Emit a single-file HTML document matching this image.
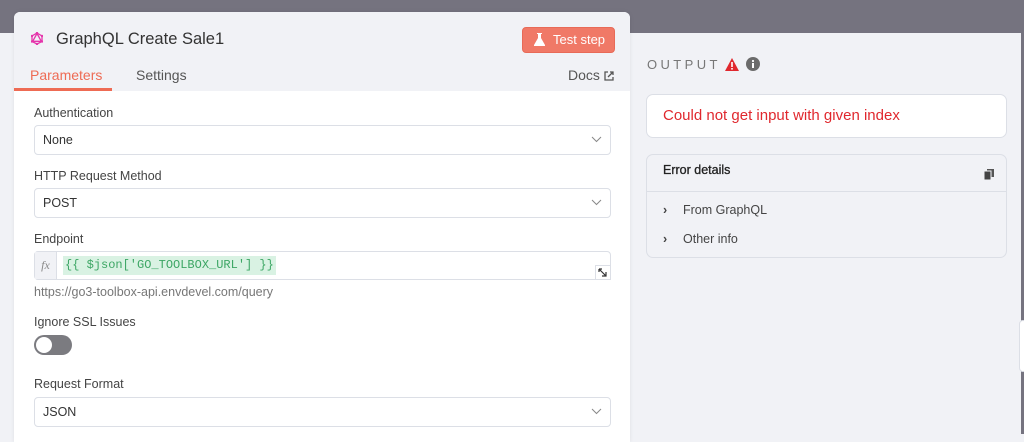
<!DOCTYPE html>
<html><head><meta charset="utf-8"><style>
*{box-sizing:border-box;margin:0;padding:0}
body{width:1024px;height:434px;overflow:hidden;background:#f1f2f6;font-family:"Liberation Sans",sans-serif;position:relative;color:#444}
.top{position:absolute;left:0;top:0;width:1024px;height:33px;background:#75737f}
.rstrip{position:absolute;left:1021px;top:33px;width:3px;height:401px;background:#75737f}
.tab{position:absolute;left:1019px;top:320px;width:8px;height:52px;background:#fff;border:1px solid #dcdfe6;border-radius:4px}
.right{position:absolute;left:630px;top:33px;width:391px;height:401px;background:#f1f2f6;border-top-right-radius:8px}
.left{position:absolute;left:14px;top:12px;width:616px;height:430px;background:#fff;border-radius:6px 6px 0 0;box-shadow:0 0 4px rgba(0,0,0,.08);overflow:hidden}
.hdr{background:#f1f2f6;height:79px;position:relative}
.title{position:absolute;left:42px;top:18px;font-size:16.5px;color:#333}
.btn{position:absolute;left:508px;top:15px;width:93px;height:26px;background:#f07967;border:1px solid #e86a57;border-radius:4px;color:#fff;font-size:13px;line-height:24px;padding-left:30px}
.tabs{position:absolute;top:55px;font-size:14px}
.lbl{position:absolute;left:20px;font-size:12.5px;color:#444}
.sel{position:absolute;left:20px;width:577px;height:30px;border:1px solid #dcdfe6;border-radius:4px;font-size:12.5px;line-height:28px;padding-left:8px;color:#333}
.sel svg.ch{position:absolute;right:8px;top:10px}
</style></head><body>
<div class="top"></div>
<div class="right">
 <div style="position:absolute;left:17px;top:24px;font-size:13px;letter-spacing:3.4px;color:#777">OUTPUT</div>
 <svg style="position:absolute;left:95px;top:25px" width="14" height="13" viewBox="0 0 14 13"><path d="M7 0L14 13H0Z" fill="#e0282e"/><rect x="6.2" y="4" width="1.6" height="5" fill="#fff"/><rect x="6.2" y="10" width="1.6" height="1.6" fill="#fff"/></svg>
 <svg style="position:absolute;left:116px;top:24px" width="14" height="14" viewBox="0 0 14 14"><circle cx="7" cy="7" r="7" fill="#6b6b6b"/><rect x="6" y="6" width="2" height="5" fill="#fff"/><circle cx="7" cy="4" r="1.1" fill="#fff"/></svg>
 <div style="position:absolute;left:16px;top:61px;width:361px;height:44px;background:#fff;border:1px solid #dcdfe6;border-radius:7px;color:#e0282e;font-size:15px;line-height:42px;padding-left:16px">Could not get input with given index</div>
 <div style="position:absolute;left:16px;top:121px;width:361px;height:104px;border:1px solid #dcdfe6;border-radius:7px">
  <div style="height:37px;border-bottom:1px solid #dcdfe6;font-size:12.5px;color:#222;padding:8px 0 0 16px;-webkit-text-stroke:0.3px #222">Error details</div>
  <svg style="position:absolute;right:12px;top:14px" width="10" height="11" viewBox="0 0 10 11"><rect x="3" y="0" width="7" height="8" fill="#555"/><rect x="0" y="2" width="7" height="9" fill="#444" stroke="#f1f2f6" stroke-width="1"/></svg>
  <div style="position:absolute;left:16px;top:48px;font-size:12.5px;color:#444"><b style="display:inline-block;width:20px">›</b>From GraphQL</div>
  <div style="position:absolute;left:16px;top:77px;font-size:12.5px;color:#444"><b style="display:inline-block;width:20px">›</b>Other info</div>
 </div>
</div>
<div class="rstrip"></div><div class="tab"></div>
<div class="left">
 <div class="hdr">
  <svg style="position:absolute;left:17px;top:20px" width="12" height="13" viewBox="0 0 12 13"><g fill="none" stroke="#e535ab" stroke-width="1.3"><path d="M6 1L11 4V9.5L6 12L1 9.5V4Z"/><path d="M6 1.5L10.3 9.3H1.7Z"/></g><g fill="#e535ab"><circle cx="6" cy="1" r="1.2"/><circle cx="11" cy="4" r="1.2"/><circle cx="11" cy="9.5" r="1.2"/><circle cx="6" cy="12" r="1.2"/><circle cx="1" cy="9.5" r="1.2"/><circle cx="1" cy="4" r="1.2"/></g></svg>
  <div class="title">GraphQL Create Sale1</div>
  <div class="btn"><svg style="position:absolute;left:11px;top:5px" width="11" height="13" viewBox="0 0 11 13"><path d="M3 0H8V1H7V5L11 12V13H0V12L4 5V1H3Z" fill="#fff"/></svg>Test step</div>
  <div class="tabs" style="left:16px;color:#ee6b54">Parameters</div>
  <div style="position:absolute;left:0;top:76px;width:98px;height:3px;background:#ee6b54"></div>
  <div class="tabs" style="left:122px;color:#555">Settings</div>
  <div class="tabs" style="left:554px;color:#555">Docs <svg width="10" height="10" viewBox="0 0 10 10" style="vertical-align:-1px"><path d="M4 1H1V9H9V6M6 1H9V4M9 1L4 6" fill="none" stroke="#555" stroke-width="1.3"/></svg></div>
 </div>
 <div class="lbl" style="top:94px">Authentication</div>
 <div class="sel" style="top:113px">None<svg class="ch" width="11" height="7" viewBox="0 0 11 7"><path d="M1 1L5.5 5.5L10 1" fill="none" stroke="#888" stroke-width="1"/></svg></div>
 <div class="lbl" style="top:157px">HTTP Request Method</div>
 <div class="sel" style="top:176px">POST<svg class="ch" width="11" height="7" viewBox="0 0 11 7"><path d="M1 1L5.5 5.5L10 1" fill="none" stroke="#888" stroke-width="1"/></svg></div>
 <div class="lbl" style="top:220px">Endpoint</div>
 <div class="sel" style="top:239px;padding:0;height:29px">
  <div style="position:absolute;left:0;top:0;width:22px;height:27px;background:#f1f2f6;border-right:1px solid #dcdfe6;font-family:'Liberation Serif',serif;font-style:italic;font-size:12px;color:#888;text-align:center;line-height:26px">fx</div>
  <span style="position:absolute;left:28px;top:4px;height:19px;line-height:19px;background:#d9f2e3;color:#3ca664;font-family:'Liberation Mono',monospace;font-size:12px;padding:0 2px">{{ $json['GO_TOOLBOX_URL'] }}</span>
  <div style="position:absolute;right:-1px;bottom:-1px;width:16px;height:15px;border:1px solid #dcdfe6;background:#fff;line-height:0"><svg width="14" height="13" viewBox="0 0 14 13"><path d="M3 3L10 10M10 6V10H6M3 3V6M3 3H6" fill="none" stroke="#333" stroke-width="1.2"/></svg></div>
 </div>
 <div class="lbl" style="top:273px;color:#777">https://go3-toolbox-api.envdevel.com/query</div>
 <div class="lbl" style="top:303px">Ignore SSL Issues</div>
 <div style="position:absolute;left:20px;top:323px;width:38px;height:20px;border-radius:10px;background:#7b7b80"><div style="position:absolute;left:2px;top:2px;width:16px;height:16px;border-radius:50%;background:#fff"></div></div>
 <div class="lbl" style="top:365px">Request Format</div>
 <div class="sel" style="top:385px">JSON<svg class="ch" width="11" height="7" viewBox="0 0 11 7"><path d="M1 1L5.5 5.5L10 1" fill="none" stroke="#888" stroke-width="1"/></svg></div>
</div>
</body></html>
